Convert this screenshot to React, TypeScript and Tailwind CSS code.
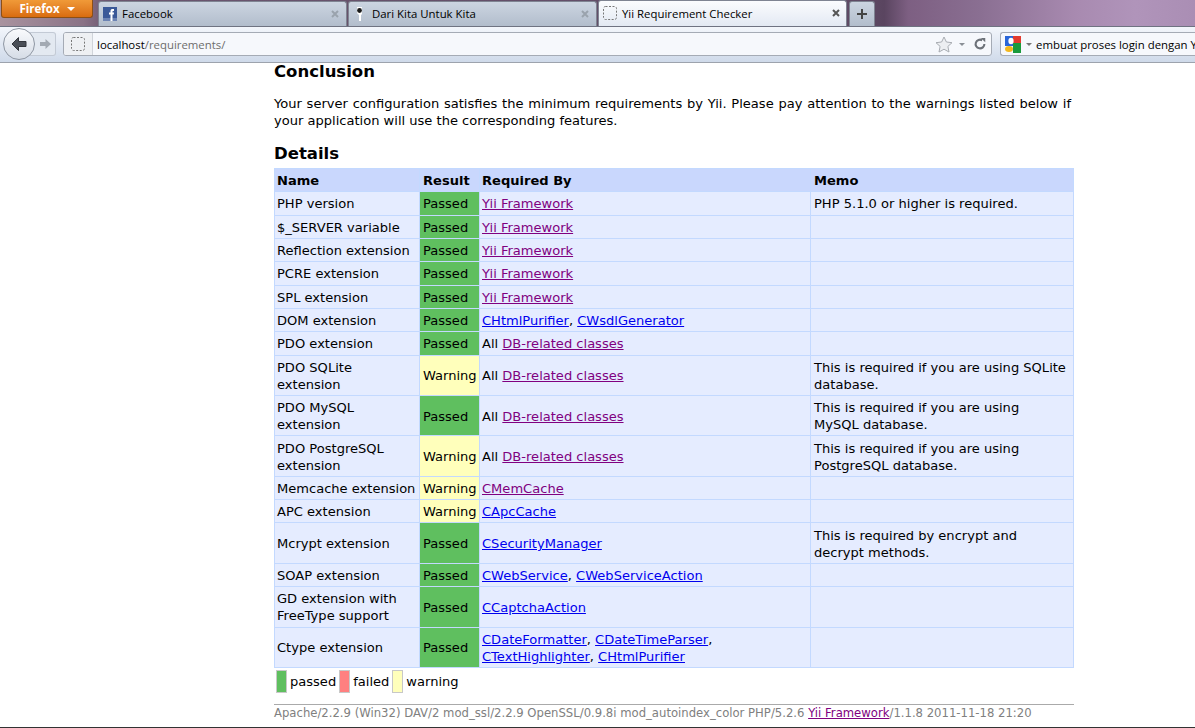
const passed = 'bg-[#5fbf5f]'
const warning = 'bg-[#ffffbb]'
const visited = 'text-[#800080] underline'
const fresh = 'text-[#0000ee] underline'

type Row = {
    name: React.ReactNode
    result: 'Passed' | 'Warning'
    by: React.ReactNode
    memo?: React.ReactNode
    tall?: boolean
}

const Yii = () => <a className={visited}>Yii Framework</a>
const Db = () => <>All <a className={visited}>DB-related classes</a></>

const rows: Row[] = [
    { name: 'PHP version', result: 'Passed', by: <Yii />, memo: 'PHP 5.1.0 or higher is required.' },
    { name: '$_SERVER variable', result: 'Passed', by: <Yii /> },
    { name: 'Reflection extension', result: 'Passed', by: <Yii /> },
    { name: 'PCRE extension', result: 'Passed', by: <Yii /> },
    { name: 'SPL extension', result: 'Passed', by: <Yii /> },
    { name: 'DOM extension', result: 'Passed', by: <><a className={fresh}>CHtmlPurifier</a>, <a className={fresh}>CWsdlGenerator</a></> },
    { name: 'PDO extension', result: 'Passed', by: <Db /> },
    { name: <>PDO SQLite<br />extension</>, result: 'Warning', by: <Db />, memo: <>This is required if you are using SQLite<br />database.</>, tall: true },
    { name: <>PDO MySQL<br />extension</>, result: 'Passed', by: <Db />, memo: <>This is required if you are using<br />MySQL database.</>, tall: true },
    { name: <>PDO PostgreSQL<br />extension</>, result: 'Warning', by: <Db />, memo: <>This is required if you are using<br />PostgreSQL database.</>, tall: true },
    { name: 'Memcache extension', result: 'Warning', by: <a className={visited}>CMemCache</a> },
    { name: 'APC extension', result: 'Warning', by: <a className={fresh}>CApcCache</a> },
    { name: 'Mcrypt extension', result: 'Passed', by: <a className={fresh}>CSecurityManager</a>, memo: <>This is required by encrypt and<br />decrypt methods.</>, tall: true },
    { name: 'SOAP extension', result: 'Passed', by: <><a className={fresh}>CWebService</a>, <a className={fresh}>CWebServiceAction</a></> },
    { name: <>GD extension with<br />FreeType support</>, result: 'Passed', by: <a className={fresh}>CCaptchaAction</a>, tall: true },
    { name: 'Ctype extension', result: 'Passed', by: <><a className={fresh}>CDateFormatter</a>, <a className={fresh}>CDateTimeParser</a>,<br /><a className={fresh}>CTextHighlighter</a>, <a className={fresh}>CHtmlPurifier</a></>, tall: true },
]

const BlankPage = ({ size = 14 }: { size?: number }) => (
    <svg width={size} height={size} viewBox="0 0 14 14" className="shrink-0">
        <rect x="0.5" y="0.5" width="13" height="13" rx="2" fill="none" stroke="#777" strokeDasharray="2 1.5" />
    </svg>
)

const TabClose = ({ dark }: { dark?: boolean }) => (
    <svg width="8" height="8" viewBox="0 0 8 8" className="shrink-0">
        <path d="M1 1 L7 7 M7 1 L1 7" stroke={dark ? '#555' : '#9aa3ad'} strokeWidth="2" />
    </svg>
)

const Tab = ({ icon, label }: { icon: React.ReactNode; label: string }) => (
    <div className="flex items-center h-[25px] w-[249px] pl-[4px] pr-[7px] pb-[1px] mr-[1px] rounded-t-[3px] border-x border-t border-[#7f8492] bg-gradient-to-b from-[#ccd5e1] to-[#b2bdcc]">
        {icon}
        <span className="ml-[5px] flex-1 truncate text-[11.4px] text-black">{label}</span>
        <TabClose />
    </div>
)

const BrowserChrome = () => (
    <div className="h-[63px] shrink-0 font-['Open_Sans',sans-serif]">
        <div className="h-[26px] flex items-end bg-[linear-gradient(90deg,#a9939f_0%,#8a7286_7%,#6b566f_9%,#5e4a64_72%,#5a4560_74%,#7d5f82_76%,#8a6f92_82%,#a88ab0_90%,#b094ba_95%,#aa8eb4_100%)]">
            <div className="self-start w-[92px] ml-[1px] h-[18px] mr-[5px] flex items-center justify-center gap-[7px] rounded-b-[3px] border border-t-0 border-[#8c4f16] bg-gradient-to-b from-[#f09a38] to-[#d96c0e] text-[11.5px] font-bold text-white">
                Firefox
                <span className="border-x-[4px] border-t-[4px] border-x-transparent border-t-white" />
            </div>
            <Tab
                label="Facebook"
                icon={
                    <svg width="14" height="14" viewBox="0 0 14 14" className="shrink-0">
                        <rect width="14" height="14" fill="#3b5998" />
                        <rect y="11" width="14" height="3" fill="#6d84b4" />
                        <path d="M7.5 14 V7.5 H6 V5.5 H7.5 V4 C7.5 2.6 8.4 2 9.6 2 H11 V4 H10 C9.6 4 9.5 4.2 9.5 4.6 V5.5 H11 L10.8 7.5 H9.5 V14 Z" fill="#fff" />
                    </svg>
                }
            />
            <Tab
                label="Dari Kita Untuk Kita"
                icon={
                    <svg width="14" height="14" viewBox="0 0 14 14" className="shrink-0">
                        <path d="M4 0 h5 v7 l-1 1 v6 h-2 v-6 l-2 -2 z" fill="#fff" />
                        <circle cx="6.5" cy="3.5" r="2.4" fill="#1a1a1a" />
                    </svg>
                }
            />
            <div className="flex items-center h-[26px] w-[249px] pl-[4px] pr-[6px] pb-[1px] rounded-t-[3px] border-x border-t border-[#7f8492] bg-gradient-to-b from-[#fbfcfe] to-[#e3e9f3]">
                <BlankPage />
                <span className="ml-[5px] flex-1 text-[11.4px] text-black">Yii Requirement Checker</span>
                <TabClose dark />
            </div>
            <div className="ml-[2px] w-[26px] h-[25px] flex items-center justify-center rounded-t-[3px] border-x border-t border-[#7f8492] bg-gradient-to-b from-[#ccd5e1] to-[#b2bdcc]">
                <svg width="10" height="10" viewBox="0 0 10 10">
                    <path d="M5 0 V10 M0 5 H10" stroke="#444" strokeWidth="2" />
                </svg>
            </div>
        </div>
        <div className="h-[37px] flex items-start border-t border-b border-t-[#6f7382] border-b-[#9da3ad] bg-gradient-to-b from-[#f3f6fb] to-[#cfdaea]">
            <div className="relative ml-[3px] mt-[1px] flex items-start">
                <div className="w-[32px] h-[32px] flex items-center justify-center rounded-full border border-[#8f97a3] bg-gradient-to-b from-[#fafbfd] to-[#d5dce6] z-10">
                    <svg width="18" height="16" viewBox="0 0 18 16">
                        <path d="M8.5 1.5 L2 8 L8.5 14.5 V10.5 H16 V5.5 H8.5 Z" fill="#4a4f57" stroke="#33363c" strokeWidth="1" strokeLinejoin="round" />
                    </svg>
                </div>
                <div className="w-[26px] h-[24px] mt-[4px] -ml-[5px] pl-[5px] flex items-center justify-center rounded-r-[3px] border border-l-0 border-[#c3cad5] bg-[#e3e9f1]">
                    <svg width="13" height="12" viewBox="0 0 13 12">
                        <path d="M6.5 1 L12 6 L6.5 11 V8 H1 V4 H6.5 Z" fill="#a3aab3" />
                    </svg>
                </div>
            </div>
            <div className="ml-[7px] mt-[5px] w-[929px] h-[24px] flex items-center rounded-[3px] border border-[#a5abb5] bg-[#f6f8fc] overflow-hidden">
                <div className="w-[29px] h-full shrink-0 flex items-center justify-center border-r border-[#d0d4da] bg-[#eef0f3]">
                    <BlankPage />
                </div>
                <span className="ml-[4px] text-[11.4px] text-black">localhost<span className="text-[#6d6d6d]">/requirements/</span></span>
                <div className="ml-auto flex items-center pr-[4px]">
                    <svg width="18" height="17" viewBox="0 0 18 17">
                        <path d="M9 1 L11.4 6 L17 6.7 L12.9 10.4 L14 16 L9 13.2 L4 16 L5.1 10.4 L1 6.7 L6.6 6 Z" fill="#eceef1" stroke="#a8acb2" />
                    </svg>
                    <span className="ml-[6px] border-x-[3px] border-t-[3px] border-x-transparent border-t-[#8a8f96]" />
                    <svg width="14" height="14" viewBox="0 0 16 16" className="ml-[8px]">
                        <path d="M13 8 A5 5 0 1 1 10.5 3.7" fill="none" stroke="#6d7279" strokeWidth="2.4" />
                        <path d="M9 1 H14 V6 Z" fill="#6d7279" />
                    </svg>
                </div>
            </div>
            <div className="ml-[8px] mt-[5px] flex-1 h-[24px] flex items-center rounded-l-[3px] border border-r-0 border-[#a5abb5] bg-[#f6f8fc] overflow-hidden">
                <svg width="16" height="17" viewBox="0 0 16 17" className="ml-[4px] shrink-0">
                    <rect x="8" y="0" width="8" height="7" fill="#e33b2e" />
                    <rect x="8" y="7" width="8" height="10" fill="#1a9a3c" />
                    <rect x="0" y="0" width="8" height="10" fill="#2a66d8" />
                    <ellipse cx="6" cy="5" rx="2.6" ry="3.2" fill="#fff" />
                    <ellipse cx="4" cy="13" rx="4" ry="3" fill="#f3b71d" />
                </svg>
                <span className="ml-[5px] border-x-[3px] border-t-[3px] border-x-transparent border-t-[#777]" />
                <span className="ml-[4px] whitespace-nowrap text-[11.4px] text-black">embuat proses login dengan Y</span>
            </div>
        </div>
    </div>
)

const App = () => {
    return (
        <div className="h-[728px] overflow-hidden flex flex-col bg-white text-[13.05px] leading-[17px] text-black font-['DejaVu_Sans',Verdana,sans-serif]">
            <BrowserChrome />
            <div className="w-[800px] ml-[274px]">
                <h1 className="mt-[1px] text-[16.5px] leading-[16px] font-bold">Conclusion</h1>
                <p className="mt-[15px] w-[797px] text-justify">
                    Your server configuration satisfies the minimum requirements by Yii. Please pay attention to the warnings listed below if your application will use the corresponding features.
                </p>
                <h2 className="mt-[17px] text-[16.5px] leading-[16px] font-bold">Details</h2>
                <table className="mt-[6px] w-[799px] table-fixed border-collapse bg-[#e5ecff]">
                    <colgroup>
                        <col className="w-[145px]" />
                        <col className="w-[60px]" />
                        <col className="w-[331px]" />
                        <col className="w-[263px]" />
                    </colgroup>
                    <thead>
                        <tr className="h-[23.33px] bg-[#c9d7fd] text-left">
                            <th className="border border-[#c3d9ff] px-[2px] py-0">Name</th>
                            <th className="border border-[#c3d9ff] pl-[3px] pr-[2px] py-0">Result</th>
                            <th className="border border-[#c3d9ff] px-[2px] py-0">Required By</th>
                            <th className="border border-[#c3d9ff] pl-[3px] pr-[2px] py-0">Memo</th>
                        </tr>
                    </thead>
                    <tbody>
                        {rows.map((row, i) => (
                            <tr key={i} className={row.tall ? 'h-[40.4px]' : 'h-[23.33px]'}>
                                <td className="border border-[#c3d9ff] px-[2px] pt-[1px] pb-0 whitespace-nowrap">{row.name}</td>
                                <td className={`border border-[#c3d9ff] pl-[3px] pr-[2px] pt-[1px] pb-0 ${row.result === 'Passed' ? passed : warning}`}>{row.result}</td>
                                <td className="border border-[#c3d9ff] px-[2px] pt-[1px] pb-0 whitespace-nowrap">{row.by}</td>
                                <td className="border border-[#c3d9ff] pl-[3px] pr-[2px] pt-[1px] pb-0 whitespace-nowrap">{row.memo}</td>
                            </tr>
                        ))}
                    </tbody>
                </table>
                <div className="mt-[2px] h-[24px] flex items-center pl-[2px]">
                    <span className={`w-[11px] h-[23px] border border-[#c8c8c8] ${passed}`} />
                    <span className="ml-[3px]">passed</span>
                    <span className="ml-[3px] w-[11px] h-[23px] border border-[#c8c8c8] bg-[#ff8080]" />
                    <span className="ml-[3px]">failed</span>
                    <span className={`ml-[3px] w-[11px] h-[23px] border border-[#c8c8c8] ${warning}`} />
                    <span className="ml-[3px]">warning</span>
                </div>
                <div className="mt-[10px] border-t border-[#aaaaaa] pt-[1px] text-[11.65px] leading-[15px] text-[#808080] whitespace-nowrap">
                    Apache/2.2.9 (Win32) DAV/2 mod_ssl/2.2.9 OpenSSL/0.9.8i mod_autoindex_color PHP/5.2.6 <a className={visited}>Yii Framework</a>/1.1.8 2011-11-18 21:20
                </div>
            </div>
            <div className="mt-auto h-[1px] shrink-0 bg-[#333333]" />
        </div>
    )
}

export default App
